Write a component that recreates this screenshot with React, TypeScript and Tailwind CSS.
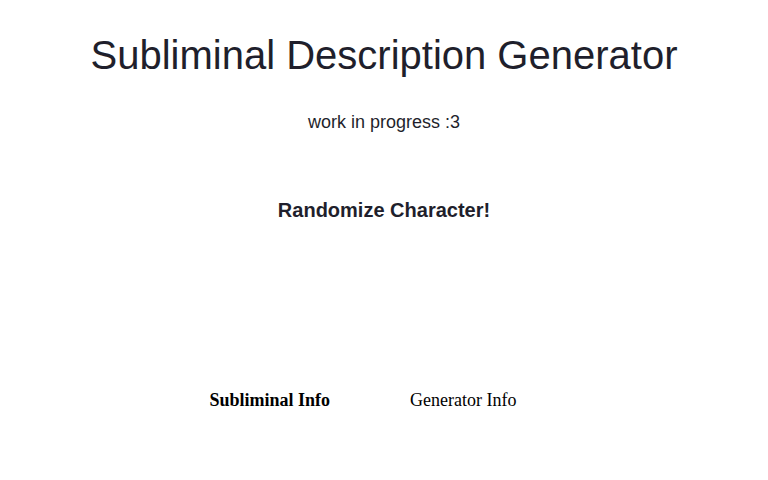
import { useState } from 'react';

const tabs = ['Subliminal Info', 'Generator Info'];

export default function App() {
  const [active, setActive] = useState(0);

  return (
    <div className="min-h-[480px] bg-white text-[#1f1f2c] font-['Liberation_Sans',Arial,sans-serif] text-center">
      <h1 className="pt-[30px] text-[40px] leading-[50px]">Subliminal Description Generator</h1>
      <p className="mt-[31px] text-[18px] leading-[22px]">work in progress :3</p>

      <button className="mt-[65px] text-[20px] leading-[24px] font-bold">Randomize Character!</button>

      <div className="mt-[165px] flex justify-center pr-[42px] font-['Liberation_Serif','Times_New_Roman',serif] text-black text-[18px] leading-[22px]">
        {tabs.map((tab, i) => (
          <button
            key={tab}
            onClick={() => setActive(i)}
            className={i === active ? 'px-10 font-bold' : 'px-10'}
          >
            {tab}
          </button>
        ))}
      </div>
    </div>
  );
}
